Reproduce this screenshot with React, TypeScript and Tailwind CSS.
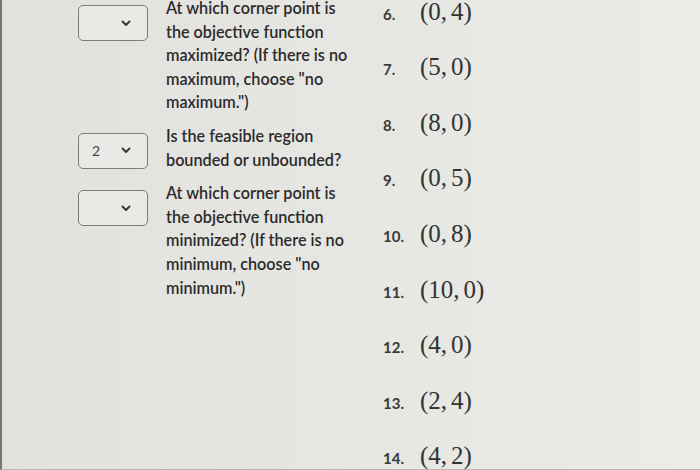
import React from "react";

const Chevron = () => (
  <svg width="10" height="7" viewBox="0 0 10 7" className="block">
    <path d="M1.5 1.5 L5 5 L8.5 1.5" fill="none" stroke="#3a3a3a" strokeWidth="2" strokeLinecap="round" strokeLinejoin="round" />
  </svg>
);

const Select = ({ value }: { value?: string }) => (
  <div className="w-[70px] h-[36px] shrink-0 rounded-[5px] border-[1.5px] border-[#7c7c7a] bg-[#e9e9e6] flex items-center pl-[13px] pr-[16px]">
    <span className="text-[14px] text-[#444] leading-none">{value ?? ""}</span>
    <span className="ml-auto">
      <Chevron />
    </span>
  </div>
);

const Question = ({ lines, value }: { lines: string[]; value?: string }) => (
  <div className="flex items-start gap-[18px]">
    <div className="mt-[9px]">
      <Select value={value} />
    </div>
    <div className="text-[16.2px] leading-[23.6px] text-[#2b2b2b] font-semibold">
      {lines.map((l, i) => (
        <div key={i} className="whitespace-nowrap">
          {l}
        </div>
      ))}
    </div>
  </div>
);

const items: [string, string, string][] = [
  ["6.", "0", "4"],
  ["7.", "5", "0"],
  ["8.", "8", "0"],
  ["9.", "0", "5"],
  ["10.", "0", "8"],
  ["11.", "10", "0"],
  ["12.", "4", "0"],
  ["13.", "2", "4"],
  ["14.", "4", "2"],
];

export default function App() {
  return (
    <div
      className="w-[700px] h-[470px] overflow-hidden bg-gradient-to-r from-[#e2e1dd] via-[#e6e6e3] to-[#ebebe8] border-l-[2px] border-l-[#77746e] border-b border-b-[#b9b8b3] flex"
      style={{ fontFamily: "Lato, 'Noto Sans', sans-serif" }}
    >
      <div className="pl-[76px] mt-[-4px] flex flex-col gap-[10px] w-[381px] shrink-0">
        <Question
          lines={[
            "At which corner point is",
            "the objective function",
            "maximized? (If there is no",
            "maximum, choose \"no",
            "maximum.\")",
          ]}
        />
        <Question lines={["Is the feasible region", "bounded or unbounded?"]} value="2" />
        <Question
          lines={[
            "At which corner point is",
            "the objective function",
            "minimized? (If there is no",
            "minimum, choose \"no",
            "minimum.\")",
          ]}
        />
      </div>
      <div className="mt-[-16px] flex flex-col">
        {items.map(([n, a, b]) => (
          <div key={n} className="h-[55.6px] shrink-0 flex items-center">
            <div className="flex items-baseline">
              <span className="w-[37px] text-[15px] font-bold text-[#3a3a3a]">{n}</span>
              <span
                className="text-[25px] text-[#333] leading-none"
                style={{ fontFamily: "'Liberation Serif', 'DejaVu Serif', serif" }}
              >
                ({a},<span className="inline-block w-[4px]" />{b})
              </span>
            </div>
          </div>
        ))}
      </div>
    </div>
  );
}
